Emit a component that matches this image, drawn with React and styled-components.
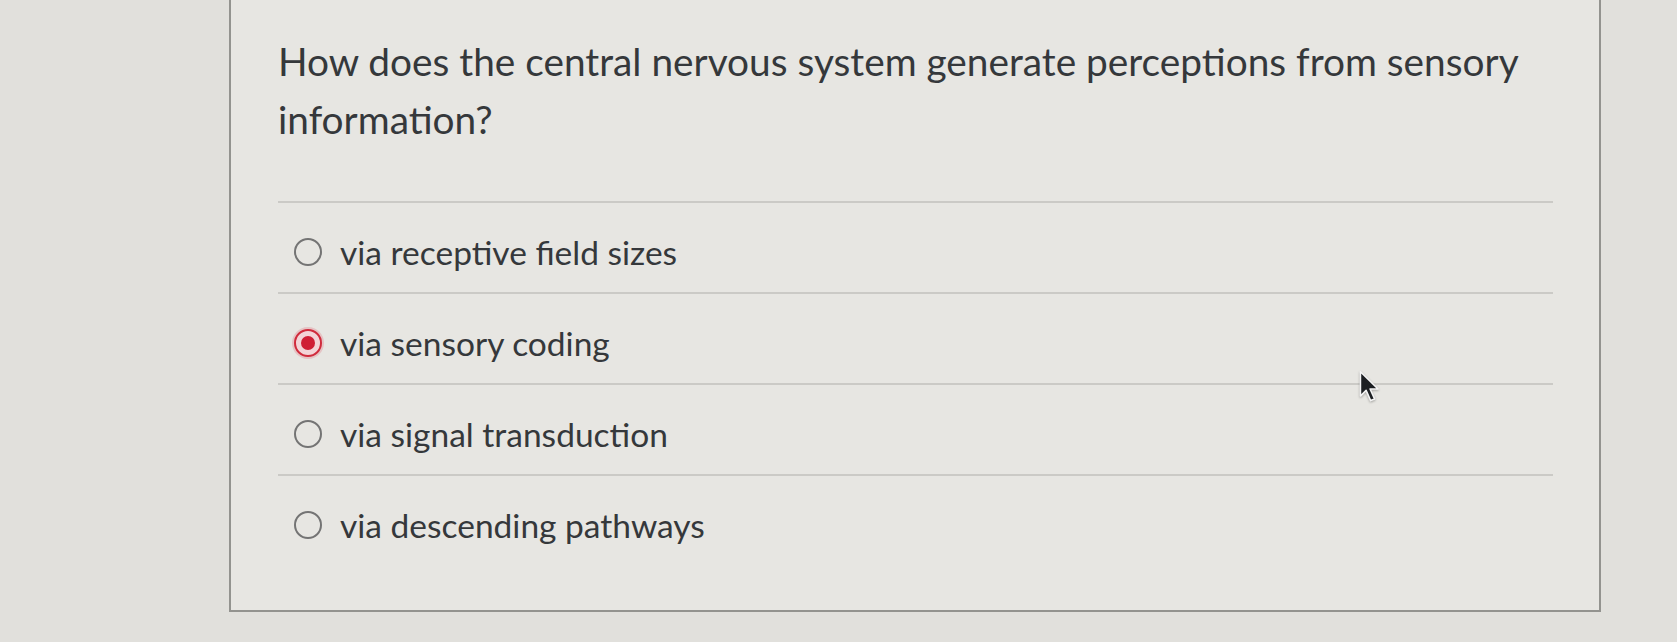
import React from 'react';
import styled, { createGlobalStyle } from 'styled-components';

const GlobalStyle = createGlobalStyle`
  html, body {
    margin: 0;
    padding: 0;
    background: #e1e0dc;
    overflow: hidden;
  }
  * {
    box-sizing: border-box;
  }
`;

const Page = styled.div`
  position: relative;
  height: 642px;
  padding-left: 229px;
  font-family: Lato, "Noto Sans", sans-serif;
  color: #35383b;
`;

const Card = styled.section`
  width: 1372px;
  height: 612px;
  background: #e7e6e2;
  border: 2px solid #93938f;
  border-top: none;
  padding: 32px 46px 0 47px;
`;

const Question = styled.p`
  margin: 0 0 53px;
  font-size: 38.8px;
  line-height: 58px;
`;

const Options = styled.div`
  display: flex;
  flex-direction: column;
`;

const Option = styled.label`
  display: flex;
  align-items: flex-start;
  gap: 18px;
  height: 91px;
  padding: 30px 0 0 16px;
  border-top: 2px solid #cbcac6;
  font-size: 33.5px;
  line-height: 38px;
  cursor: pointer;
`;

const Radio = styled.span`
  flex: none;
  width: 28px;
  height: 28px;
  margin-top: 5px;
  border-radius: 50%;
  border: 2px solid ${(p) => (p.$checked ? '#d02b3c' : '#747474')};
  background: ${(p) => (p.$checked ? '#f3d4d7' : 'transparent')};
  box-shadow: ${(p) => (p.$checked ? '0 0 0 2px rgba(226, 130, 140, 0.35)' : 'none')};
  display: flex;
  align-items: center;
  justify-content: center;

  &::after {
    content: '';
    display: ${(p) => (p.$checked ? 'block' : 'none')};
    width: 14px;
    height: 14px;
    border-radius: 50%;
    background: #cf1f35;
  }
`;

const Pointer = styled.svg`
  position: absolute;
  left: 1358px;
  top: 370px;
  filter: drop-shadow(0 1px 1px rgba(0, 0, 0, 0.3));
`;

const choices = [
  'via receptive field sizes',
  'via sensory coding',
  'via signal transduction',
  'via descending pathways',
];

export default function App() {
  return (
    <Page>
      <GlobalStyle />
      <Card>
        <Question>
          How does the central nervous system generate perceptions from sensory information?
        </Question>
        <Options>
          {choices.map((c, i) => (
            <Option key={c}>
              <Radio $checked={i === 1} />
              {c}
            </Option>
          ))}
        </Options>
      </Card>
      <Pointer width="23" height="34" viewBox="0 0 20 30">
        <path
          d="M2 1.5 L2 23 L7 18 L11 27 L14.5 25.5 L10.5 16.8 L17.5 16.8 Z"
          fill="#1c1f22"
          stroke="#f4f4f4"
          strokeWidth="1.4"
          strokeLinejoin="round"
        />
      </Pointer>
    </Page>
  );
}
